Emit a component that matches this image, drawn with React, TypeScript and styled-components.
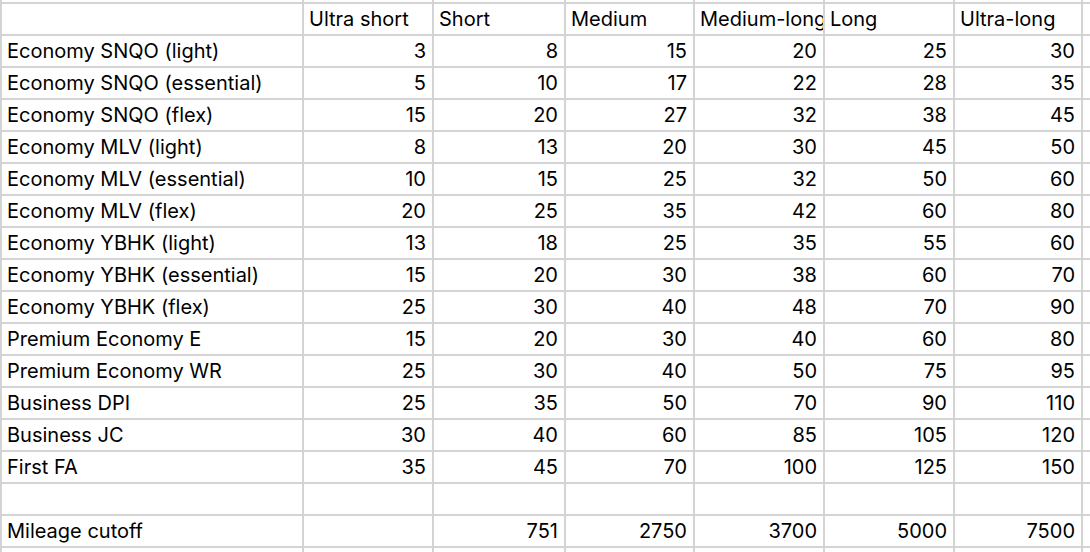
import React from 'react';
import styled, { createGlobalStyle } from 'styled-components';

const GlobalStyle = createGlobalStyle`
  html, body {
    margin: 0;
    padding: 0;
    background: #fff;
    overflow: hidden;
  }
`;

const Sheet = styled.div`
  display: grid;
  grid-template-columns: 300px 128px 130px 127px 128px 128px 126px 1fr;
  grid-template-rows: 2px repeat(17, 30px) 10px;
  gap: 2px;
  padding-left: 2px;
  width: 1090px;
  height: 552px;
  box-sizing: border-box;
  background: #d4d4d4;
  overflow: hidden;
  font-family: Inter, "Liberation Sans", sans-serif;
  font-size: 20px;
  color: #000;
`;

const Cell = styled.div<{ $num?: boolean }>`
  background: #fff;
  line-height: 30px;
  white-space: nowrap;
  overflow: hidden;
  padding: ${({ $num }) => ($num ? '0 6px 0 4px' : '0 4px 0 5px')};
  text-align: ${({ $num }) => ($num ? 'right' : 'left')};
`;

const headers = ['Ultra short', 'Short', 'Medium', 'Medium-long', 'Long', 'Ultra-long'];

const rows: [string, (number | '')[]][] = [
  ['Economy SNQO (light)', [3, 8, 15, 20, 25, 30]],
  ['Economy SNQO (essential)', [5, 10, 17, 22, 28, 35]],
  ['Economy SNQO (flex)', [15, 20, 27, 32, 38, 45]],
  ['Economy MLV (light)', [8, 13, 20, 30, 45, 50]],
  ['Economy MLV (essential)', [10, 15, 25, 32, 50, 60]],
  ['Economy MLV (flex)', [20, 25, 35, 42, 60, 80]],
  ['Economy YBHK (light)', [13, 18, 25, 35, 55, 60]],
  ['Economy YBHK (essential)', [15, 20, 30, 38, 60, 70]],
  ['Economy YBHK (flex)', [25, 30, 40, 48, 70, 90]],
  ['Premium Economy E', [15, 20, 30, 40, 60, 80]],
  ['Premium Economy WR', [25, 30, 40, 50, 75, 95]],
  ['Business DPI', [25, 35, 50, 70, 90, 110]],
  ['Business JC', [30, 40, 60, 85, 105, 120]],
  ['First FA', [35, 45, 70, 100, 125, 150]],
  ['', ['', '', '', '', '', '']],
  ['Mileage cutoff', ['', 751, 2750, 3700, 5000, 7500]],
];

const blank = (key: string) =>
  Array.from({ length: 8 }, (_, i) => <Cell key={`${key}-${i}`} />);

export default function App() {
  return (
    <>
      <GlobalStyle />
      <Sheet>
        {blank('top')}
        <Cell />
        {headers.map((h) => (
          <Cell key={h}>{h}</Cell>
        ))}
        <Cell />
        {rows.map(([label, values], r) => (
          <React.Fragment key={r}>
            <Cell>{label}</Cell>
            {values.map((v, c) => (
              <Cell $num key={c}>{v}</Cell>
            ))}
            <Cell />
          </React.Fragment>
        ))}
        {blank('bottom')}
      </Sheet>
    </>
  );
}
